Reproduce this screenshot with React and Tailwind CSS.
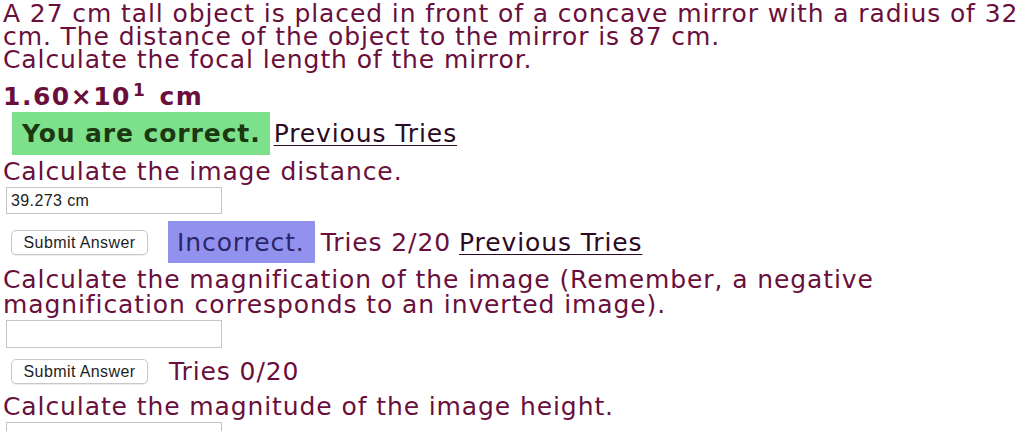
export default function App() {
  const btn =
    "ml-[11px] w-[137px] h-[25px] rounded-[5px] border border-[#c8c8c8] bg-white text-[16px] tracking-[0.4px] text-[#1e1e1e] font-['Liberation_Sans',Arial,sans-serif] leading-[23px] shadow-[0_1px_1px_rgba(0,0,0,0.08)]";
  return (
    <div className="w-[1024px] h-[431px] overflow-hidden bg-white text-[#6a0f3c] font-['DejaVu_Sans',Verdana,sans-serif] text-[25px] leading-[23px] tracking-[0.9px] whitespace-nowrap">
      <div className="pl-[3px] pt-[2px]">
        A 27 cm tall object is placed in front of a concave mirror with a radius of 32
        <br />
        cm. The distance of the object to the mirror is 87 cm.
        <br />
        Calculate the focal length of the mirror.
      </div>
      <div className="pl-[3px] mt-[14px] h-[24px] font-bold leading-[24px] tracking-[1.5px]">
        1.60×10<sup className="text-[17px] relative top-[-9px] align-baseline ml-[2px] mr-[3px]">1</sup> cm
      </div>
      <div className="flex items-center h-[43px] mt-[3px]">
        <span className="ml-[12px] h-[43px] flex items-center pl-[10px] pr-[9px] bg-[#7de18b] font-bold text-[#1b3810]">You are correct.</span>
        <a className="ml-[4px] underline text-[#2b0a24] decoration-1 underline-offset-[3px]">Previous Tries</a>
      </div>
      <div className="pl-[3px] mt-[5px]">Calculate the image distance.</div>
      <div className="pl-[6px] mt-[4px]">
        <div className="w-[216px] h-[27px] border border-[#c4c4c4] bg-white flex items-center px-[4px] text-[16px] tracking-[0.4px] text-[#222] font-['Liberation_Sans',Arial,sans-serif]">39.273 cm</div>
      </div>
      <div className="flex items-center h-[42px] mt-[7px]">
        <button className={btn}>Submit Answer</button>
        <span className="ml-[20px] h-[42px] flex items-center pl-[9px] pr-[10px] bg-[#9292ee] text-[#2c2668]">Incorrect.</span>
        <span className="ml-[6px]">Tries 2/20</span>
        <a className="ml-[8px] underline text-[#2b0a24] decoration-1 underline-offset-[3px]">Previous Tries</a>
      </div>
      <div className="pl-[3px] mt-[4px] leading-[25px]">
        Calculate the magnification of the image (Remember, a negative
        <br />
        magnification corresponds to an inverted image).
      </div>
      <div className="pl-[6px] mt-[3px]">
        <div className="w-[216px] h-[28px] border border-[#c4c4c4] bg-white"></div>
      </div>
      <div className="flex items-center h-[26px] mt-[10px]">
        <button className={btn}>Submit Answer</button>
        <span className="ml-[21px]">Tries 0/20</span>
      </div>
      <div className="pl-[3px] mt-[11px]">Calculate the magnitude of the image height.</div>
      <div className="pl-[6px] mt-[4px]">
        <div className="w-[216px] h-[28px] border border-[#c4c4c4] bg-white"></div>
      </div>
    </div>
  );
}
